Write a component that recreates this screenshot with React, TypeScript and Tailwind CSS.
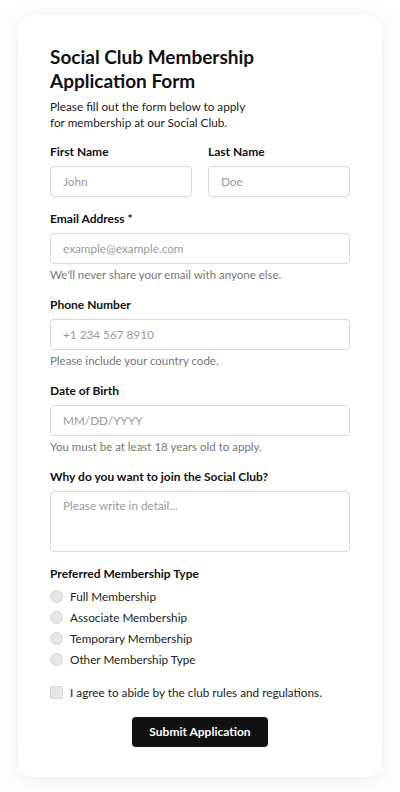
import { useState } from 'react'

const FONT = { fontFamily: '"Lato", "Noto Sans", sans-serif' }

function Field({ label, placeholder, help }: { label: string; placeholder: string; help?: string }) {
  return (
    <div className="flex flex-col">
      <label className="text-[12px] font-bold leading-[18px] text-[#111]">{label}</label>
      <input
        placeholder={placeholder}
        className="mt-[5px] h-[31px] w-full rounded-[4px] border border-[#d9d9d9] px-3 text-[11.75px] text-[#222] placeholder:text-[#9a9a9a] outline-none"
      />
      {help && <p className="mt-1 text-[11.5px] leading-[14px] text-[#777]">{help}</p>}
    </div>
  )
}

const TYPES = ['Full Membership', 'Associate Membership', 'Temporary Membership', 'Other Membership Type']

export default function App() {
  const [type, setType] = useState('')
  const [agree, setAgree] = useState(false)

  return (
    <div className="min-h-screen bg-white px-[18px] pt-[15px] pb-[15px]" style={FONT}>
      <form
        className="flex flex-col rounded-2xl bg-white px-8 pt-[30px] pb-[30px] shadow-[0_4px_24px_rgba(0,0,0,0.08)]"
        onSubmit={e => e.preventDefault()}
      >
        <h1 className="text-[19px] font-bold leading-6 text-[#111]">Social Club Membership Application Form</h1>
        <p className="mt-1.5 text-[11.75px] leading-4 text-[#222]">
          Please fill out the form below to apply
          <br />
          for membership at our Social Club.
        </p>

        <div className="mt-3 grid grid-cols-2 gap-4">
          <Field label="First Name" placeholder="John" />
          <Field label="Last Name" placeholder="Doe" />
        </div>

        <div className="mt-[13px]">
          <Field label="Email Address *" placeholder="example@example.com" help="We'll never share your email with anyone else." />
        </div>
        <div className="mt-[14px]">
          <Field label="Phone Number" placeholder="+1 234 567 8910" help="Please include your country code." />
        </div>
        <div className="mt-[14px]">
          <Field label="Date of Birth" placeholder="MM/DD/YYYY" help="You must be at least 18 years old to apply." />
        </div>

        <div className="mt-[14px] flex flex-col">
          <label className="text-[12px] font-bold leading-[18px] text-[#111]">Why do you want to join the Social Club?</label>
          <textarea
            placeholder="Please write in detail..."
            className="mt-[5px] h-[61px] w-full resize-none rounded-[4px] border border-[#d9d9d9] px-3 py-[6px] text-[11.75px] leading-4 text-[#222] placeholder:text-[#9a9a9a] outline-none"
          />
        </div>

        <div className="mt-[13px] flex flex-col">
          <span className="text-[12px] font-bold leading-[18px] text-[#111]">Preferred Membership Type</span>
          <div className="mt-[3px] flex flex-col">
            {TYPES.map(t => (
              <label key={t} className="flex h-[21px] items-center gap-[7px] text-[11.75px] text-[#222]">
                <input
                  type="radio"
                  name="type"
                  checked={type === t}
                  onChange={() => setType(t)}
                  className="h-[13px] w-[13px] appearance-none rounded-full border border-[#d6d6d6] bg-[#e6e6e6] checked:bg-[#111]"
                />
                {t}
              </label>
            ))}
          </div>
        </div>

        <label className="mt-3 flex h-[21px] items-center gap-[7px] text-[11.75px] text-[#222]">
          <input
            type="checkbox"
            checked={agree}
            onChange={e => setAgree(e.target.checked)}
            className="h-[13px] w-[13px] appearance-none rounded-[2px] border border-[#d6d6d6] bg-[#e6e6e6] checked:bg-[#111]"
          />
          I agree to abide by the club rules and regulations.
        </label>

        <div className="mt-[14px] flex justify-center">
          <button type="submit" className="h-[30px] w-[136px] rounded-[4px] bg-[#111] text-[12px] font-bold text-white">
            Submit Application
          </button>
        </div>
      </form>
    </div>
  )
}
